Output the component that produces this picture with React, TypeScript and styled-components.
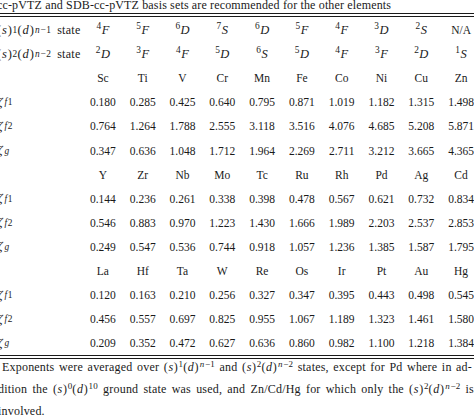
import React from "react";
import styled, { createGlobalStyle } from "styled-components";

const Global = createGlobalStyle`
  html, body { margin: 0; padding: 0; background: #fff; }
  body { overflow: hidden; font-family: "Liberation Serif", "Times New Roman", serif; color: #1a1a1a; }
`;

const Page = styled.div`
  width: 474px;
  height: 420px;
  overflow: hidden;
  background: #fff;
`;

const Sheet = styled.div`
  width: 484px;
  margin-left: -3px;
  font-size: 11.5px;
`;

const Caption = styled.div`
  font-size: 12px;
  line-height: 14px;
  margin-top: -2px;
  white-space: nowrap;
  letter-spacing: 0.15px;
`;

const DoubleRule = styled.div<{ $top: number }>`
  margin-top: ${(p) => p.$top}px;
  height: 2px;
  border-top: 1px solid #1a1a1a;
  border-bottom: 1px solid #1a1a1a;
`;

const Grid = styled.div`
  display: grid;
  grid-template-columns: 86px repeat(10, 39.8px);
  grid-auto-rows: 24.1px;
  margin-top: 1px;
`;

const Label = styled.div`
  display: flex;
  align-items: center;
  white-space: nowrap;
  font-size: 12.5px;
  letter-spacing: 0.3px;
`;

const Word = styled.span`
  margin-left: 6px;
  font-size: 12px;
  letter-spacing: 0.3px;
`;

const Cell = styled.div`
  display: flex;
  align-items: center;
  justify-content: center;
  white-space: nowrap;
`;

const TermBox = styled.span`
  font-size: 12.5px;
`;

const I = styled.i`
  font-style: italic;
  padding: 0 0.5px;
`;

const Sup = styled.sup`
  font-size: 0.75em;
  line-height: 0;
  vertical-align: 0.45em;
  margin-left: 0.5px;
`;

const Sub = styled.sub`
  font-size: 0.75em;
  line-height: 0;
  vertical-align: -0.35em;
  margin-left: 0.5px;
`;

const Notes = styled.div`
  margin-top: -3px;
  line-height: 22px;
  font-size: 12px;
  letter-spacing: 0.2px;
`;

const NoteLine = styled.div<{ $indent: number; $width: number; $justify: boolean }>`
  margin-left: ${(p) => p.$indent}px;
  width: ${(p) => p.$width}px;
  white-space: nowrap;
  text-align: ${(p) => (p.$justify ? "justify" : "left")};
  text-align-last: ${(p) => (p.$justify ? "justify" : "left")};
`;

const Term = ({ t }: { t: string }) =>
  t === "N/A" ? (
    <>N/A</>
  ) : (
    <TermBox>
      <Sup>{t[0]}</Sup>
      <I>{t.slice(1)}</I>
    </TermBox>
  );

const Config = ({ s, d }: { s: string; d: string }) => (
  <>
    (<I>s</I>)<Sup>{s}</Sup>(<I>d</I>)
    <Sup>
      {d.startsWith("n") ? (
        <>
          <I>n</I>
          {d.slice(1)}
        </>
      ) : (
        d
      )}
    </Sup>
  </>
);

const Zeta = ({ sub }: { sub: string }) => (
  <>
    <I>ζ</I>
    <Sub>
      {sub === "g" ? (
        <I>g</I>
      ) : (
        <>
          <I>f</I>
          {sub.slice(1)}
        </>
      )}
    </Sub>
  </>
);

const terms1 = ["4F", "5F", "6D", "7S", "6D", "5F", "4F", "3D", "2S", "N/A"];
const terms2 = ["2D", "3F", "4F", "5D", "6S", "5D", "4F", "3F", "2D", "1S"];

const blocks: { elements: string[]; f1: string[]; f2: string[]; g: string[] }[] = [
  {
    elements: ["Sc", "Ti", "V", "Cr", "Mn", "Fe", "Co", "Ni", "Cu", "Zn"],
    f1: ["0.180", "0.285", "0.425", "0.640", "0.795", "0.871", "1.019", "1.182", "1.315", "1.498"],
    f2: ["0.764", "1.264", "1.788", "2.555", "3.118", "3.516", "4.076", "4.685", "5.208", "5.871"],
    g: ["0.347", "0.636", "1.048", "1.712", "1.964", "2.269", "2.711", "3.212", "3.665", "4.365"],
  },
  {
    elements: ["Y", "Zr", "Nb", "Mo", "Tc", "Ru", "Rh", "Pd", "Ag", "Cd"],
    f1: ["0.144", "0.236", "0.261", "0.338", "0.398", "0.478", "0.567", "0.621", "0.732", "0.834"],
    f2: ["0.546", "0.883", "0.970", "1.223", "1.430", "1.666", "1.989", "2.203", "2.537", "2.853"],
    g: ["0.249", "0.547", "0.536", "0.744", "0.918", "1.057", "1.236", "1.385", "1.587", "1.795"],
  },
  {
    elements: ["La", "Hf", "Ta", "W", "Re", "Os", "Ir", "Pt", "Au", "Hg"],
    f1: ["0.120", "0.163", "0.210", "0.256", "0.327", "0.347", "0.395", "0.443", "0.498", "0.545"],
    f2: ["0.456", "0.557", "0.697", "0.825", "0.955", "1.067", "1.189", "1.323", "1.461", "1.580"],
    g: ["0.209", "0.352", "0.472", "0.627", "0.636", "0.860", "0.982", "1.100", "1.218", "1.384"],
  },
];

export default function App() {
  return (
    <Page>
      <Global />
      <Sheet>
        <Caption>cc-pVTZ and SDB-cc-pVTZ basis sets are recommended for the other elements</Caption>
        <DoubleRule $top={1} />
        <Grid>
          <Label>
            <Config s="1" d="n−1" />
            <Word>state</Word>
          </Label>
          {terms1.map((t, i) => (
            <Cell key={"a" + i}>
              <Term t={t} />
            </Cell>
          ))}
          <Label>
            <Config s="2" d="n−2" />
            <Word>state</Word>
          </Label>
          {terms2.map((t, i) => (
            <Cell key={"b" + i}>
              <Term t={t} />
            </Cell>
          ))}
          {blocks.map((b, bi) => (
            <React.Fragment key={bi}>
              <Label />
              {b.elements.map((e) => (
                <Cell key={e}>{e}</Cell>
              ))}
              <Label>
                <Zeta sub="f1" />
              </Label>
              {b.f1.map((v, i) => (
                <Cell key={"f1" + i}>{v}</Cell>
              ))}
              <Label>
                <Zeta sub="f2" />
              </Label>
              {b.f2.map((v, i) => (
                <Cell key={"f2" + i}>{v}</Cell>
              ))}
              <Label>
                <Zeta sub="g" />
              </Label>
              {b.g.map((v, i) => (
                <Cell key={"g" + i}>{v}</Cell>
              ))}
            </React.Fragment>
          ))}
        </Grid>
        <DoubleRule $top={0} />
        <Notes>
          <NoteLine $indent={5} $width={470} $justify>
            Exponents were averaged over <Config s="1" d="n−1" /> and <Config s="2" d="n−2" /> states, except for Pd where in ad-
          </NoteLine>
          <NoteLine $indent={1} $width={476} $justify>
            dition the <Config s="0" d="10" /> ground state was used, and Zn/Cd/Hg for which only the <Config s="2" d="n−2" /> is
          </NoteLine>
          <NoteLine $indent={1} $width={476} $justify={false}>
            involved.
          </NoteLine>
        </Notes>
      </Sheet>
    </Page>
  );
}
